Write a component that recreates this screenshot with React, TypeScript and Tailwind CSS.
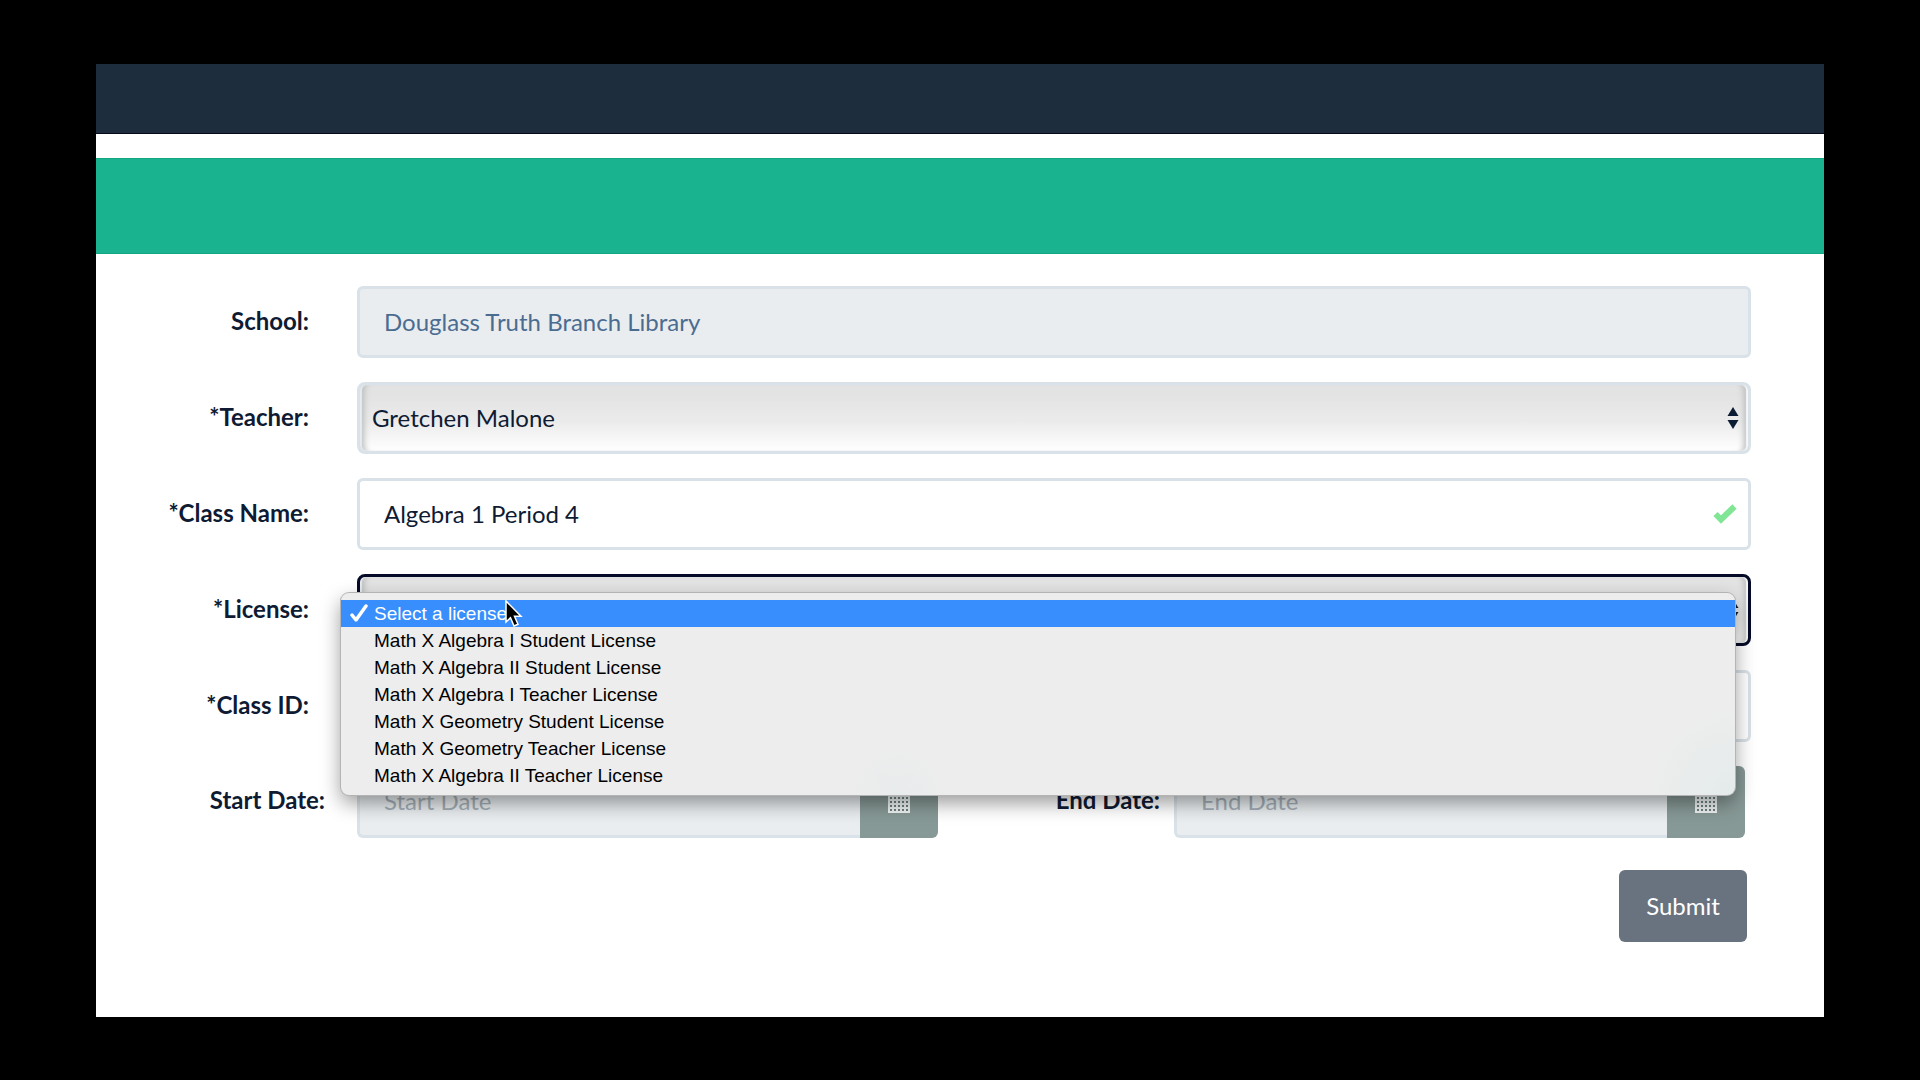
import type { ReactNode } from "react";

const LICENSES = [
    "Select a license",
    "Math X Algebra I Student License",
    "Math X Algebra II Student License",
    "Math X Algebra I Teacher License",
    "Math X Geometry Student License",
    "Math X Geometry Teacher License",
    "Math X Algebra II Teacher License",
];

const fieldBase = "w-full h-[72px] border-3 outline-none";
const inputBase = "rounded-md border-[#d9e2e8] px-6 pb-0.5";
const selectBase =
    "appearance-none rounded-lg pl-3 pr-12 bg-linear-to-b from-[#e3e3e3] from-15% via-[#ebebeb] via-55% to-white shadow-[inset_2px_0_1px_#e6ecef,inset_-2px_0_1px_#f6f8f8,inset_9px_0_6px_-5px_#b9babb,inset_-9px_0_6px_-5px_#b9babb]";

function Row({ id, label, children }: { id: string; label: string; children: ReactNode }) {
    return (
        <div className="flex items-center">
            <label htmlFor={id} className="w-[261px] pr-12 pb-0.5 text-right font-bold whitespace-nowrap">
                {label}
            </label>
            <div className="relative flex-1">{children}</div>
        </div>
    );
}

function SelectArrows() {
    return (
        <svg
            viewBox="0 0 12 22"
            className="absolute right-3 top-[25px] w-3 h-[22px] pointer-events-none"
            fill="#0b1c33"
            aria-hidden="true"
        >
            <path d="M6 0 11.500 9H.5z" />
            <path d="M.5 13h11L6 22z" />
        </svg>
    );
}

function CalendarIcon() {
    const dots = [];
    for (let y = 0; y < 4; y++) {
        for (let x = 0; x < 5; x++) {
            dots.push(<rect key={`${x}-${y}`} x={2 + x * 4} y={6 + y * 4} width="2" height="2" />);
        }
    }
    return (
        <svg viewBox="0 0 22 22" className="w-[22px] h-[22px]" aria-hidden="true">
            <path d="M0 2h4V0h2v2h10V0h2v2h4v20H0z" fill="#eef2f2" />
            <g fill="#6e807d">{dots}</g>
        </svg>
    );
}

function DateField({ id, placeholder }: { id: string; placeholder: string }) {
    return (
        <>
            <input
                id={id}
                placeholder={placeholder}
                disabled
                className="flex-1 min-w-0 h-[72px] border-3 border-r-0 border-[#d9e2e8] rounded-l-md bg-[#e9edef] px-6 pb-1 placeholder:text-[#a3adb6]"
            />
            <button
                type="button"
                aria-label={`Pick ${placeholder}`}
                className="flex justify-center items-center w-[78px] h-[72px] rounded-r-md bg-[#879996]"
            >
                <CalendarIcon />
            </button>
        </>
    );
}

function LicenseMenu() {
    return (
        <ul
            role="listbox"
            aria-label="License"
            className="absolute z-10 -left-4 right-4 top-[19px] pt-[7px] pb-1.5 rounded-lg bg-[#ededed] bg-[radial-gradient(circle_at_100%_100%,#e4ebeb,transparent_90px),radial-gradient(circle_at_40%_100%,#e8ebec,transparent_50px)] text-black font-[Liberation_Sans,sans-serif] text-[19px] leading-[27px] shadow-[0_0_0_1px_#b4b4b4,0_8px_20px_rgba(0,0,0,0.4)]"
        >
            {LICENSES.map((name, i) => (
                <li
                    key={name}
                    role="option"
                    aria-selected={i === 0}
                    className={`relative pl-[33px] ${i === 0 ? "bg-[#388efd] text-white" : ""}`}
                >
                    {i === 0 && (
                        <svg
                            viewBox="0 0 18 19"
                            className="absolute left-[9px] top-1 w-[18px] h-[19px]"
                            fill="none"
                            stroke="white"
                            strokeWidth="3.500"
                            aria-hidden="true"
                        >
                            <path d="M2 11 6 16 16 2" strokeLinecap="round" strokeLinejoin="round" />
                        </svg>
                    )}
                    {name}
                    {i === 0 && (
                        <svg
                            viewBox="0 0 18 28"
                            className="absolute left-[164px] top-0 w-[18px] h-[28px]"
                            aria-hidden="true"
                        >
                            <path
                                d="M1 1v21l4.500-4.300 3.500 8.300 4-1.700-3.500-8H16z"
                                fill="black"
                                stroke="white"
                                strokeWidth="1.500"
                            />
                        </svg>
                    )}
                </li>
            ))}
        </ul>
    );
}

export default function App() {
    return (
        <div className="min-h-screen bg-black px-[5%] py-16 font-[Lato,sans-serif] text-2xl text-[#0e1b33]">
            <main className="bg-white pb-[75px]">
                <header className="h-[70px] bg-[#1e2d3d] border-b border-[#04081d]" />
                <div className="h-24 mt-6 bg-[#1ab38f] border-y border-[#14a582]" />
                <form className="flex flex-col gap-6 pt-8 pr-[73px]">
                    <Row id="school" label="School:">
                        <input
                            id="school"
                            defaultValue="Douglass Truth Branch Library"
                            readOnly
                            className={`${fieldBase} ${inputBase} bg-[#e9edef] text-[#4b6c91]`}
                        />
                    </Row>
                    <Row id="teacher" label="*Teacher:">
                        <select id="teacher" className={`${fieldBase} ${selectBase} border-[#d9e2e8]`}>
                            <option>Gretchen Malone</option>
                        </select>
                        <SelectArrows />
                    </Row>
                    <Row id="className" label="*Class Name:">
                        <input
                            id="className"
                            defaultValue="Algebra 1 Period 4"
                            className={`${fieldBase} ${inputBase} bg-white`}
                        />
                        <svg
                            viewBox="0 0 24 20"
                            className="absolute right-[14px] top-[26px] w-6 h-5"
                            fill="none"
                            stroke="#80e695"
                            strokeWidth="6"
                            aria-hidden="true"
                        >
                            <path d="M2.500 10 8 15.500 21.500 2.500" />
                        </svg>
                    </Row>
                    <Row id="license" label="*License:">
                        <select id="license" className={`${fieldBase} ${selectBase} border-[#050b26]`}>
                            {LICENSES.map((name) => (
                                <option key={name}>{name}</option>
                            ))}
                        </select>
                        <SelectArrows />
                        <LicenseMenu />
                    </Row>
                    <Row id="classId" label="*Class ID:">
                        <input id="classId" className={`${fieldBase} ${inputBase} bg-white`} />
                    </Row>
                    <div className="flex items-center pr-[6px]">
                        <label htmlFor="startDate" className="w-[261px] pr-8 pb-1 text-right font-bold whitespace-nowrap">
                            Start Date:
                        </label>
                        <div className="flex flex-[58]">
                            <DateField id="startDate" placeholder="Start Date" />
                        </div>
                        <label htmlFor="endDate" className="w-[236px] pr-[14px] pb-1 text-right font-bold whitespace-nowrap">
                            End Date:
                        </label>
                        <div className="flex flex-[57]">
                            <DateField id="endDate" placeholder="End Date" />
                        </div>
                    </div>
                    <div className="flex justify-end pt-2 pr-1">
                        <button type="submit" className="w-32 h-[72px] rounded-md bg-[#69737f] text-white">
                            Submit
                        </button>
                    </div>
                </form>
            </main>
        </div>
    );
}
